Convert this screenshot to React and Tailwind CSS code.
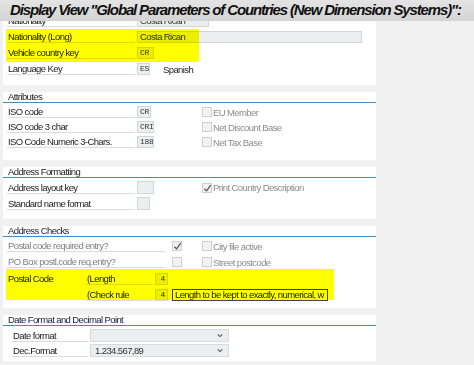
import React from "react";

const Label = ({ children, className = "", muted }) => (
  <div
    className={`h-[12px] shrink-0 border-b border-[#dcdcdc] pl-[1px] leading-[11px] whitespace-nowrap ${
      muted ? "text-[#808080]" : "text-[#222]"
    } ${className}`}
  >
    {children}
  </div>
);

const Field = ({ children, className = "", mono }) => (
  <div
    className={`h-[12px] shrink-0 overflow-hidden whitespace-nowrap border border-[#d3d6d9] bg-[#eceef0] px-[2px] leading-[10px] text-[#333] ${
      mono ? "font-['Liberation_Mono',monospace] text-[8px] tracking-[-0.3px]" : ""
    } ${className}`}
  >
    {children}
  </div>
);

const Check = ({ checked, label }) => (
  <div className="flex items-center gap-[1px] text-[#8c8c8c]">
    <span className="relative h-[10px] w-[10px] shrink-0 border border-[#cfcfcf] bg-[#f2f2f2]">
      {checked && (
        <svg viewBox="0 0 10 10" className="absolute left-0 top-0 h-[9px] w-[9px]">
          <path d="M1.5 5.2 L4 7.6 L8.6 1.2" fill="none" stroke="#555" strokeWidth="1.4" />
        </svg>
      )}
    </span>
    {label && <span className="leading-[11px] whitespace-nowrap">{label}</span>}
  </div>
);

const Panel = ({ title, children, className = "" }) => (
  <div className={`bg-white ${className}`}>
    {title && (
      <div className="h-[11px] border-b-[1.5px] border-[#3d8fc6] pl-[5px] leading-[10px] text-[#222]">
        {title}
      </div>
    )}
    {children}
  </div>
);

export default function App() {
  return (
    <div className="h-[365px] w-[474px] overflow-hidden bg-[#f1f1f1] font-['Liberation_Sans',Arial,sans-serif] text-[9.5px] tracking-[-0.6px]">
      <div className="relative z-10 h-[21px] bg-gradient-to-b from-[#e4e4e4] to-[#d4d4d4] pl-[10px] font-['Liberation_Sans',Arial,sans-serif] text-[15px] font-bold italic leading-[20px] tracking-[-1.15px] text-[#111] whitespace-nowrap">
        Display View "Global Parameters of Countries (New Dimension Systems)":
      </div>

      <div className="ml-[3px] flex w-[373px] flex-col gap-[7px]">
        <Panel className="relative h-[64px] overflow-hidden">
          <div className="-mt-[6px] flex flex-col gap-[4px] pl-[4px]">
            <div className="flex items-center gap-[2px]">
              <Label className="w-[128px]">Nationality</Label>
              <Field className="w-[72px]">Costa Rican</Field>
            </div>
            <div className="flex items-center gap-[2px]">
              <Label className="w-[128px]">Nationality (Long)</Label>
              <Field className="w-[225px]">Costa Rican</Field>
            </div>
            <div className="flex items-center gap-[2px]">
              <Label className="w-[128px]">Vehicle country key</Label>
              <Field mono className="w-[17px]">CR</Field>
            </div>
            <div className="flex items-center gap-[2px]">
              <Label className="w-[128px]">Language Key</Label>
              <Field mono className="w-[13px] px-[1px]">ES</Field>
              <span className="ml-[11px] leading-[11px] text-[#222]">Spanish</span>
            </div>
          </div>
          <div className="pointer-events-none absolute left-[3px] top-[8px] h-[33px] w-[193px] bg-[#ffff00] mix-blend-multiply" />
        </Panel>

        <Panel title="Attributes" className="h-[68px]">
          <div className="mt-[3px] flex flex-col gap-[3px] pl-[4px]">
            {[
              ["ISO code", "CR", "w-[14px]", "EU Member"],
              ["ISO code 3 char", "CRI", "w-[17px]", "Net Discount Base"],
              ["ISO Code Numeric 3-Chars.", "188", "w-[17px]", "Net Tax Base"],
            ].map(([l, v, w, c]) => (
              <div key={l} className="flex items-center">
                <Label className="w-[128px]">{l}</Label>
                <Field mono className={`ml-[2px] ${w}`}>{v}</Field>
                <div className="ml-auto w-[174px]">
                  <Check label={c} />
                </div>
              </div>
            ))}
          </div>
        </Panel>

        <Panel title="Address Formatting" className="h-[52px]">
          <div className="mt-[3px] flex flex-col gap-[3px] pl-[4px]">
            <div className="flex items-center">
              <Label className="w-[128px]">Address layout key</Label>
              <Field className="ml-[2px] h-[13px] w-[17px]" />
              <div className="ml-auto w-[174px]">
                <Check checked label="Print Country Description" />
              </div>
            </div>
            <div className="flex items-center">
              <Label className="w-[128px]">Standard name format</Label>
              <Field className="ml-[2px] h-[13px] w-[13px]" />
            </div>
          </div>
        </Panel>

        <Panel title="Address Checks" className="relative h-[82px]">
          <div className="mt-[3px] flex flex-col gap-[4px] pl-[4px]">
            <div className="flex items-center">
              <Label muted className="w-[158px]">Postal code required entry?</Label>
              <div className="ml-[7px]">
                <Check checked />
              </div>
              <div className="ml-auto w-[174px]">
                <Check label="City file active" />
              </div>
            </div>
            <div className="flex items-center">
              <Label muted className="w-[158px]">PO Box postl.code req.entry?</Label>
              <div className="ml-[7px]">
                <Check />
              </div>
              <div className="ml-auto w-[174px]">
                <Check label="Street postcode" />
              </div>
            </div>
            <div className="mt-[1px] flex items-center">
              <Label className="w-[77px] border-transparent">Postal Code</Label>
              <Label className="ml-[2px] w-[67px]">(Length</Label>
              <Field mono className="ml-[2px] w-[13px] text-right">4</Field>
            </div>
            <div className="flex items-center">
              <div className="w-[77px]" />
              <Label className="ml-[2px] w-[67px]">(Check rule</Label>
              <Field mono className="ml-[2px] w-[13px] text-right">4</Field>
              <div className="ml-[4px] h-[12px] w-[156px] overflow-hidden whitespace-nowrap border border-[#444] bg-white pl-[2px] leading-[10px] text-[#222]">
                Length to be kept to exactly, numerical, w
              </div>
            </div>
          </div>
          <div className="pointer-events-none absolute left-[3px] top-[43px] h-[31px] w-[328px] bg-[#ffff00] mix-blend-multiply" />
        </Panel>

        <Panel title="Date Format and Decimal Point" className="h-[46px]">
          <div className="mt-[3px] flex flex-col gap-[2px] pl-[9px]">
            {[
              ["Date format", ""],
              ["Dec.Format", "1.234.567,89"],
            ].map(([l, v]) => (
              <div key={l} className="flex items-center">
                <Label className="w-[76px]">{l}</Label>
                <div className="ml-[2px] flex h-[13px] w-[139px] items-center justify-between border border-[#d8dadc] bg-[#eceef0] pl-[4px] pr-[5px] leading-[11px] text-[#333]">
                  <span>{v}</span>
                  <svg viewBox="0 0 8 6" className="h-[5px] w-[6px]">
                    <path d="M1 1.5 L4 4.5 L7 1.5" fill="none" stroke="#555" strokeWidth="1.4" />
                  </svg>
                </div>
              </div>
            ))}
          </div>
        </Panel>
      </div>
    </div>
  );
}
